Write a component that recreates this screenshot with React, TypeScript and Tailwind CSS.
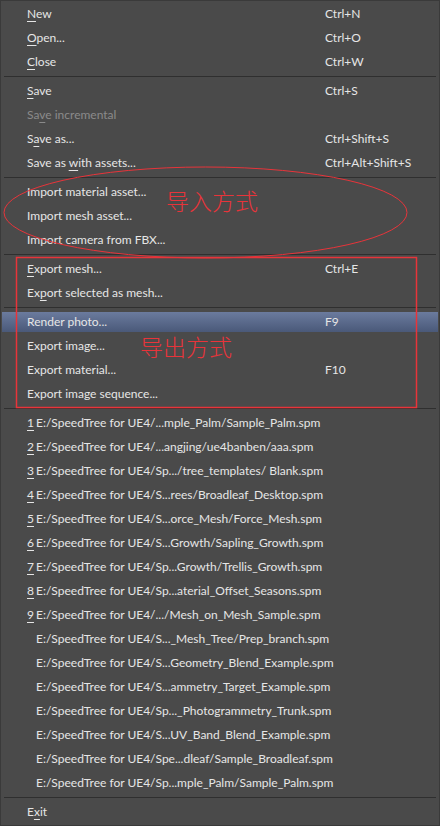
import React from 'react'

type Item =
  | { type: 'sep' }
  | { type: 'item'; label: string; u?: number; shortcut?: string; disabled?: boolean; active?: boolean }
  | { type: 'recent'; num?: string; path: string }

const items: Item[] = [
  { type: 'item', label: 'New', u: 0, shortcut: 'Ctrl+N' },
  { type: 'item', label: 'Open...', u: 0, shortcut: 'Ctrl+O' },
  { type: 'item', label: 'Close', u: 0, shortcut: 'Ctrl+W' },
  { type: 'sep' },
  { type: 'item', label: 'Save', u: 0, shortcut: 'Ctrl+S' },
  { type: 'item', label: 'Save incremental', u: 2, disabled: true },
  { type: 'item', label: 'Save as...', u: 1, shortcut: 'Ctrl+Shift+S' },
  { type: 'item', label: 'Save as with assets...', u: 8, shortcut: 'Ctrl+Alt+Shift+S' },
  { type: 'sep' },
  { type: 'item', label: 'Import material asset...' },
  { type: 'item', label: 'Import mesh asset...' },
  { type: 'item', label: 'Import camera from FBX...' },
  { type: 'sep' },
  { type: 'item', label: 'Export mesh...', u: 0, shortcut: 'Ctrl+E' },
  { type: 'item', label: 'Export selected as mesh...', u: 2 },
  { type: 'sep' },
  { type: 'item', label: 'Render photo...', shortcut: 'F9', active: true },
  { type: 'item', label: 'Export image...' },
  { type: 'item', label: 'Export material...', shortcut: 'F10' },
  { type: 'item', label: 'Export image sequence...' },
  { type: 'sep' },
  { type: 'recent', num: '1', path: 'E:/SpeedTree for UE4/...mple_Palm/Sample_Palm.spm' },
  { type: 'recent', num: '2', path: 'E:/SpeedTree for UE4/...angjing/ue4banben/aaa.spm' },
  { type: 'recent', num: '3', path: 'E:/SpeedTree for UE4/Sp.../tree_templates/ Blank.spm' },
  { type: 'recent', num: '4', path: 'E:/SpeedTree for UE4/S...rees/Broadleaf_Desktop.spm' },
  { type: 'recent', num: '5', path: 'E:/SpeedTree for UE4/S...orce_Mesh/Force_Mesh.spm' },
  { type: 'recent', num: '6', path: 'E:/SpeedTree for UE4/S...Growth/Sapling_Growth.spm' },
  { type: 'recent', num: '7', path: 'E:/SpeedTree for UE4/Sp...Growth/Trellis_Growth.spm' },
  { type: 'recent', num: '8', path: 'E:/SpeedTree for UE4/Sp...aterial_Offset_Seasons.spm' },
  { type: 'recent', num: '9', path: 'E:/SpeedTree for UE4/.../Mesh_on_Mesh_Sample.spm' },
  { type: 'recent', path: 'E:/SpeedTree for UE4/S..._Mesh_Tree/Prep_branch.spm' },
  { type: 'recent', path: 'E:/SpeedTree for UE4/S...Geometry_Blend_Example.spm' },
  { type: 'recent', path: 'E:/SpeedTree for UE4/S...ammetry_Target_Example.spm' },
  { type: 'recent', path: 'E:/SpeedTree for UE4/Sp..._Photogrammetry_Trunk.spm' },
  { type: 'recent', path: 'E:/SpeedTree for UE4/S...UV_Band_Blend_Example.spm' },
  { type: 'recent', path: 'E:/SpeedTree for UE4/Spe...dleaf/Sample_Broadleaf.spm' },
  { type: 'recent', path: 'E:/SpeedTree for UE4/Sp...mple_Palm/Sample_Palm.spm' },
  { type: 'sep' },
  { type: 'item', label: 'Exit', u: 1 },
]

const Label = ({ text, u }: { text: string; u?: number }) => {
  if (u === undefined) return <>{text}</>
  return (
    <>
      {text.slice(0, u)}
      <span className="underline underline-offset-[3px]">{text[u]}</span>
      {text.slice(u + 1)}
    </>
  )
}

const App = () => {
  return (
    <div
      className="relative w-[440px] h-[826px] bg-[#4a4a4a] border border-[#3a3a3a] p-[1px] text-[12px] text-[#e6e6e6]"
      style={{ fontFamily: 'Lato, "Noto Sans", sans-serif' }}
    >
      {items.map((it, i) => {
        if (it.type === 'sep') {
          return (
            <div key={i} className="py-[2px] px-[2px]">
              <div className="h-px bg-[#2f2f2f]" />
            </div>
          )
        }
        if (it.type === 'recent') {
          return (
            <div key={i} className="h-6 flex items-center pl-[25px] whitespace-nowrap">
              <span className="inline-block w-[9px]">
                {it.num && <span className="underline underline-offset-[3px]">{it.num}</span>}
              </span>
              {it.path}
            </div>
          )
        }
        return (
          <div key={i} className="h-6 flex flex-col justify-center">
            <div
              className={
                it.active
                  ? 'h-5 flex items-center pl-[25px] bg-gradient-to-b from-[#6b7b9e] to-[#4a5979]'
                  : 'h-5 flex items-center pl-[25px]'
              }
            >
              <span className={it.disabled ? 'w-[298px] text-[#8a8a8a]' : 'w-[298px]'}>
                <Label text={it.label} u={it.u} />
              </span>
              {it.shortcut && <span>{it.shortcut}</span>}
            </div>
          </div>
        )
      })}

      {/* red annotations drawn over the menu */}
      <svg className="absolute left-[-1px] top-[-1px] pointer-events-none" width="440" height="826">
        <ellipse cx="205.5" cy="212.5" rx="201.5" ry="45.5" fill="none" stroke="#e8343a" strokeWidth="1" />
        <rect x="16.5" y="257.5" width="400" height="150" fill="none" stroke="#e8343a" strokeWidth="1.5" />
      </svg>
      <div
        className="absolute left-[165px] top-[188px] text-[23px] leading-none text-[#e8343a]"
        style={{ fontFamily: '"Noto Sans CJK SC", sans-serif', fontWeight: 300 }}
      >
        导入方式
      </div>
      <div
        className="absolute left-[139px] top-[334px] text-[23px] leading-none text-[#e8343a]"
        style={{ fontFamily: '"Noto Sans CJK SC", sans-serif', fontWeight: 300 }}
      >
        导出方式
      </div>
    </div>
  )
}

export default App
